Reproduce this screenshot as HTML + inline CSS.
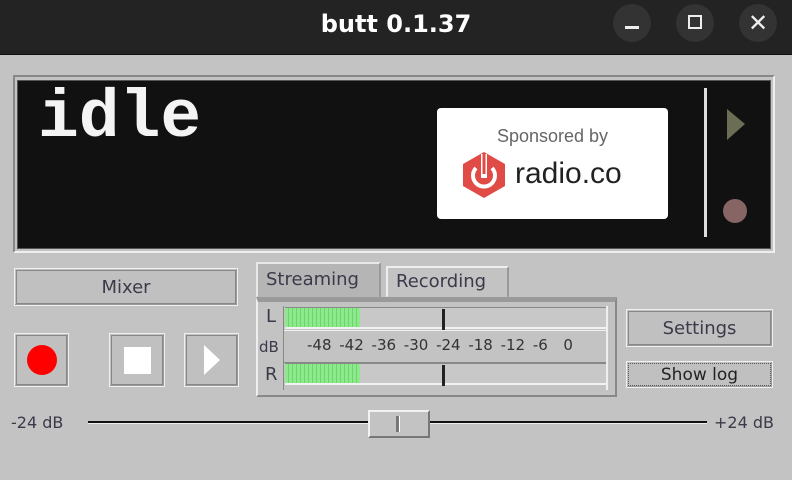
<!DOCTYPE html>
<html><head><style>
*{margin:0;padding:0;box-sizing:border-box}
body{width:792px;height:480px;background:#c3c3c3;position:relative;overflow:hidden;font-family:"DejaVu Sans","Liberation Sans",sans-serif;color:#3a3a4a}
.a{position:absolute}
.btn{position:absolute;border:1px solid #f0f0f0;outline:1px solid #888;outline-offset:-3px;background:#c0c0c0;display:flex;align-items:center;justify-content:center;font-size:18px;box-shadow:inset -1px -1px 0 #999}
.meter{position:absolute;left:285px;width:321px;height:22px;background:#c8c8c8;border-top:1px solid #888;border-bottom:2px solid #f2f2f2}
.green{position:absolute;left:0;top:0;width:75px;height:100%;background:repeating-linear-gradient(90deg,#8ee88e 0 3px,#6cd66c 3px 4px)}
</style></head><body>
<div class="a" style="left:0;top:0;width:792px;height:55px;background:#232323"></div>
<div class="a" style="left:0;top:54px;width:792px;height:1px;background:#111"></div>
<div class="a" style="left:0;top:10px;width:792px;text-align:center;color:#fff;font:bold 24px 'DejaVu Sans',sans-serif">butt 0.1.37</div>
<div class="a" style="left:613px;top:4px;width:38px;height:38px;border-radius:50%;background:#333"></div>
<div class="a" style="left:625px;top:26px;width:14px;height:3px;background:#eee"></div>
<div class="a" style="left:676px;top:4px;width:38px;height:38px;border-radius:50%;background:#333"></div>
<div class="a" style="left:688px;top:15px;width:14px;height:14px;border:2px solid #eee"></div>
<div class="a" style="left:739px;top:4px;width:38px;height:38px;border-radius:50%;background:#333"></div>
<div class="a" style="left:745px;top:4px;width:26px;height:38px;color:#eee;font:bold 24px 'DejaVu Sans';text-align:center;line-height:38px">✕</div>

<div class="a" style="left:13px;top:75px;width:762px;height:178px;border:2px solid;border-color:#888 #eee #eee #888;background:#c3c3c3"></div>
<div class="a" style="left:17px;top:80px;width:754px;height:169px;background:#111;border:1px solid #555"></div>
<div class="a" style="left:38px;top:80px;color:#f4f4f4;font:bold 68px 'Liberation Mono',monospace">idle</div>
<div class="a" style="left:437px;top:108px;width:231px;height:111px;background:#fff;border-radius:4px"></div>
<div class="a" style="left:437px;top:126px;width:231px;text-align:center;color:#666;font:18px 'Liberation Sans',sans-serif">Sponsored by</div>
<svg class="a" style="left:460px;top:150px" width="48" height="50" viewBox="0 0 48 50"><path d="M24 2 L45 14 V36 L24 48 L3 36 V14 Z" fill="#e14b45"/><path d="M16 18 A11 11 0 1 0 32 18" fill="none" stroke="#fff" stroke-width="4"/><rect x="21" y="4" width="6" height="24" fill="#fff"/><rect x="22.5" y="4" width="3" height="20" fill="#e14b45"/></svg>
<div class="a" style="left:515px;top:157px;color:#222;font:30px 'Liberation Sans',sans-serif">radio.co</div>
<div class="a" style="left:704px;top:88px;width:3px;height:149px;background:#ddd"></div>
<svg class="a" style="left:726px;top:108px" width="20" height="34"><path d="M1 1 L19 16 L1 32 Z" fill="#6b6e55"/></svg>
<div class="a" style="left:723px;top:199px;width:24px;height:24px;border-radius:50%;background:#876565"></div>

<div class="btn" style="left:14px;top:268px;width:224px;height:38px">Mixer</div>

<div class="a" style="left:256px;top:262px;width:125px;height:36px;background:#b5b5b5;border:2px solid;border-color:#e8e8e8 #999 transparent #e8e8e8;font-size:18px;padding:5px 0 0 8px">Streaming</div>
<div class="a" style="left:386px;top:266px;width:123px;height:32px;background:#c3c3c3;border:2px solid;border-color:#eee #999 transparent #eee;font-size:18px;padding:3px 0 0 8px">Recording</div>
<div class="a" style="left:256px;top:297px;width:361px;height:100px;border:2px solid;border-color:#eee #888 #888 #eee;border-top:5px solid #9a9a9a;background:#c3c3c3"></div>
<div class="a" style="left:266px;top:306px;font-size:18px">L</div>
<div class="a" style="left:259px;top:338px;font-size:15px">dB</div>
<div class="a" style="left:265px;top:364px;font-size:18px">R</div>
<div class="a" style="left:283px;top:306px;width:325px;height:84px;border-left:1px solid #888;border-right:2px solid #eee"></div>
<div class="meter" style="top:307px"><div class="green"></div></div>
<div class="meter" style="top:363px"><div class="green"></div></div>
<div class="a" style="left:442px;top:309px;width:3px;height:21px;background:#222"></div>
<div class="a" style="left:442px;top:365px;width:3px;height:21px;background:#222"></div>
<div class="a" style="left:307px;top:336px;width:310px;font-size:15px;word-spacing:3px;color:#333">-48 -42 -36 -30 -24 -18 -12 -6 &nbsp;0</div>
<div class="a" style="left:284px;top:330px;width:322px;height:1px;background:#f0f0f0"></div>
<div class="a" style="left:284px;top:362px;width:322px;height:1px;background:#888"></div>

<div class="btn" style="left:14px;top:333px;width:55px;height:54px"><div style="width:30px;height:30px;border-radius:50%;background:#f00"></div></div>
<div class="btn" style="left:109px;top:333px;width:56px;height:54px"><div style="width:27px;height:27px;background:#fff"></div></div>
<div class="btn" style="left:184px;top:333px;width:55px;height:54px"><svg width="20" height="32"><path d="M2 1 L18 16 L2 31 Z" fill="#fff"/></svg></div>

<div class="btn" style="left:626px;top:309px;width:147px;height:38px">Settings</div>
<div class="btn" style="left:626px;top:361px;width:147px;height:27px;outline:1px dotted #555;font-size:17px;color:#222">Show log</div>

<div class="a" style="left:11px;top:413px;font-size:16px">-24 dB</div>
<div class="a" style="left:714px;top:413px;font-size:16px">+24 dB</div>
<div class="a" style="left:88px;top:421px;width:619px;height:3px;background:#111;border-bottom:1px solid #eee"></div>
<div class="a" style="left:368px;top:410px;width:62px;height:28px;border:2px solid;border-color:#f2f2f2 #777 #777 #f2f2f2;background:#c3c3c3"></div>
<div class="a" style="left:396px;top:416px;width:4px;height:16px;background:#777;border-right:1px solid #fff"></div>
</body></html>
